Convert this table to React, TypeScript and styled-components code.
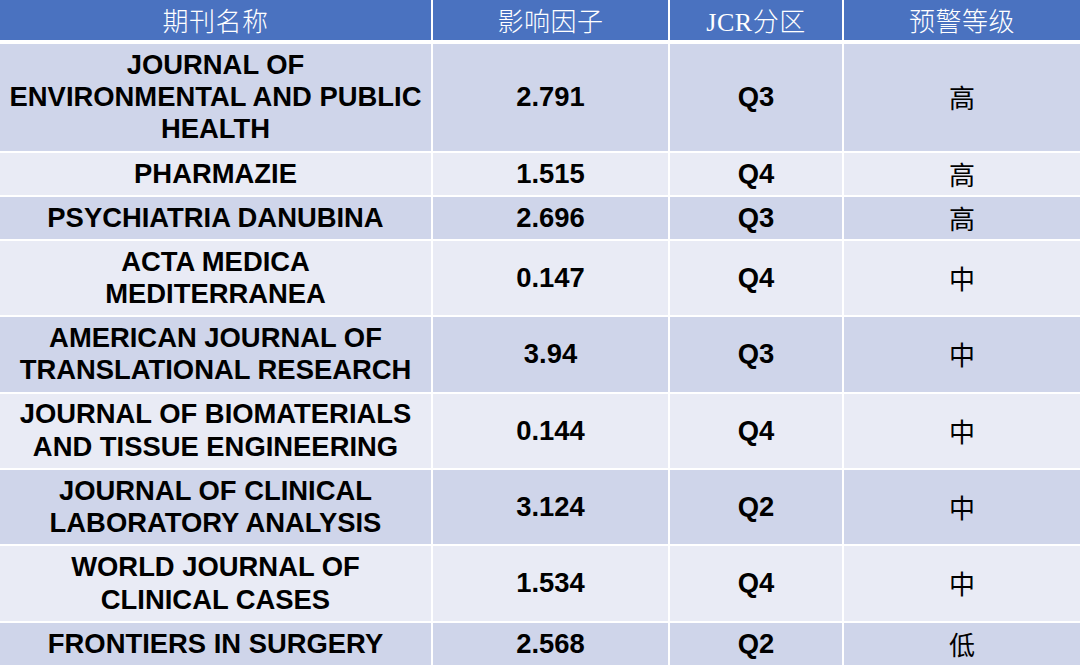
import React from "react";
import styled, { createGlobalStyle } from "styled-components";

const Global = createGlobalStyle`
  html, body { margin: 0; padding: 0; background: #ffffff; }
  body { overflow: hidden; }
`;

const Table = styled.div`
  display: grid;
  grid-template-columns: 431px 235px 172px 236px;
  column-gap: 2px;
  row-gap: 2px;
  width: 1080px;
  background: #ffffff;
`;

const HeadCell = styled.div`
  height: 40px;
  margin-bottom: 2px;
  background: #4a72c0;
  color: #ffffff;
  display: flex;
  align-items: center;
  justify-content: center;
  font-family: "Liberation Serif", "Noto Sans CJK SC", serif;
  font-weight: 300;
  font-size: 26px;
  letter-spacing: 0.5px;
  padding-bottom: 1px;
  box-sizing: border-box;
`;

const Cell = styled.div<{ $band: boolean }>`
  background: ${(p) => (p.$band ? "#cfd5ea" : "#e9ebf5")};
  display: flex;
  align-items: center;
  justify-content: center;
  text-align: center;
  padding: 4.9px 4px;
  color: #000000;
  font-family: "Liberation Sans", Arial, sans-serif;
  font-weight: 700;
  font-size: 27.4px;
  line-height: 32.3px;
`;

const LevelCell = styled(Cell)`
  font-family: "Noto Sans CJK SC", sans-serif;
  font-weight: 400;
  font-size: 26px;
`;

const rows = [
  ["JOURNAL OF\nENVIRONMENTAL AND PUBLIC\nHEALTH", "2.791", "Q3", "高"],
  ["PHARMAZIE", "1.515", "Q4", "高"],
  ["PSYCHIATRIA DANUBINA", "2.696", "Q3", "高"],
  ["ACTA MEDICA\nMEDITERRANEA", "0.147", "Q4", "中"],
  ["AMERICAN JOURNAL OF\nTRANSLATIONAL RESEARCH", "3.94", "Q3", "中"],
  ["JOURNAL OF BIOMATERIALS\nAND TISSUE ENGINEERING", "0.144", "Q4", "中"],
  ["JOURNAL OF CLINICAL\nLABORATORY ANALYSIS", "3.124", "Q2", "中"],
  ["WORLD JOURNAL OF\nCLINICAL CASES", "1.534", "Q4", "中"],
  ["FRONTIERS IN SURGERY", "2.568", "Q2", "低"],
];

const Name = styled.span`
  white-space: pre-line;
`;

export default function App() {
  return (
    <>
      <Global />
      <Table>
        <HeadCell>期刊名称</HeadCell>
        <HeadCell>影响因子</HeadCell>
        <HeadCell>JCR分区</HeadCell>
        <HeadCell>预警等级</HeadCell>
        {rows.map((r, i) => {
          const band = i % 2 === 0;
          return (
            <React.Fragment key={i}>
              <Cell $band={band}>
                <Name>{r[0]}</Name>
              </Cell>
              <Cell $band={band}>{r[1]}</Cell>
              <Cell $band={band}>{r[2]}</Cell>
              <LevelCell $band={band}>{r[3]}</LevelCell>
            </React.Fragment>
          );
        })}
      </Table>
    </>
  );
}
